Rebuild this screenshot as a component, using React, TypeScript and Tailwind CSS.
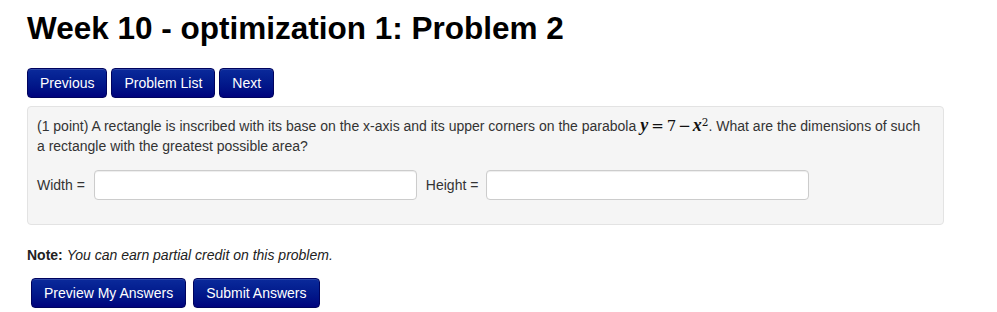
import React from 'react';

const btn =
  'h-[30px] px-[12px] rounded-[4px] border border-[#00035e] bg-gradient-to-b from-[#0b2a9b] to-[#00037d] text-white text-[14px] leading-[28px] shadow-[inset_0_1px_0_rgba(255,255,255,0.15)]';

export default function App() {
  return (
    <div className="min-h-screen bg-white pl-[27px] font-['Liberation_Sans',Arial,sans-serif] text-[14px] leading-[20px] text-[#333]">
      <h1 className="pt-[11px] text-[31.5px] leading-[35px] font-bold text-black">
        Week 10 - optimization 1: Problem 2
      </h1>

      {/* navegación */}
      <div className="mt-[22px] flex gap-[4px]">
        <button className={btn}>Previous</button>
        <button className={btn}>Problem List</button>
        <button className={btn}>Next</button>
      </div>

      {/* enunciado */}
      <div className="mt-[8px] w-[917px] rounded-[4px] border border-[#e3e3e3] bg-[#f5f5f5] px-[9px] pt-[9px] pb-[24px]">
        <p>
          <span className="whitespace-nowrap">
            (1 point) A rectangle is inscribed with its base on the x-axis and its upper corners on the parabola{' '}
            <span className="font-['DejaVu_Serif',serif] text-[15px] leading-[0] text-[#111]">
              <span className="font-['Liberation_Serif',serif] text-[18px] italic font-semibold leading-[0]">y</span>
              <span className="mx-[3px]">=</span>7<span className="mx-[2px]">−</span>
              <span className="font-['Liberation_Serif',serif] text-[18px] italic font-semibold leading-[0]">x</span>
              <sup className="text-[10.5px] leading-[0]">2</sup>
            </span>
            . What are the dimensions of such
          </span>
          <br />
          a rectangle with the greatest possible area?
        </p>
        <div className="mt-[14px] flex items-center">
          <span>Width =</span>
          <input className="ml-[9px] h-[30px] w-[323px] rounded-[4px] border border-[#ccc] bg-white shadow-[inset_0_1px_1px_rgba(0,0,0,0.075)]" />
          <span className="ml-[9px]">Height =</span>
          <input className="ml-[8px] h-[30px] w-[323px] rounded-[4px] border border-[#ccc] bg-white shadow-[inset_0_1px_1px_rgba(0,0,0,0.075)]" />
        </div>
      </div>

      <p className="mt-[20px] text-[#222]">
        <b>Note:</b> <i>You can earn partial credit on this problem.</i>
      </p>

      <div className="mt-[13px] ml-[4px] flex gap-[7px]">
        <button className={btn}>Preview My Answers</button>
        <button className={btn}>Submit Answers</button>
      </div>
    </div>
  );
}
